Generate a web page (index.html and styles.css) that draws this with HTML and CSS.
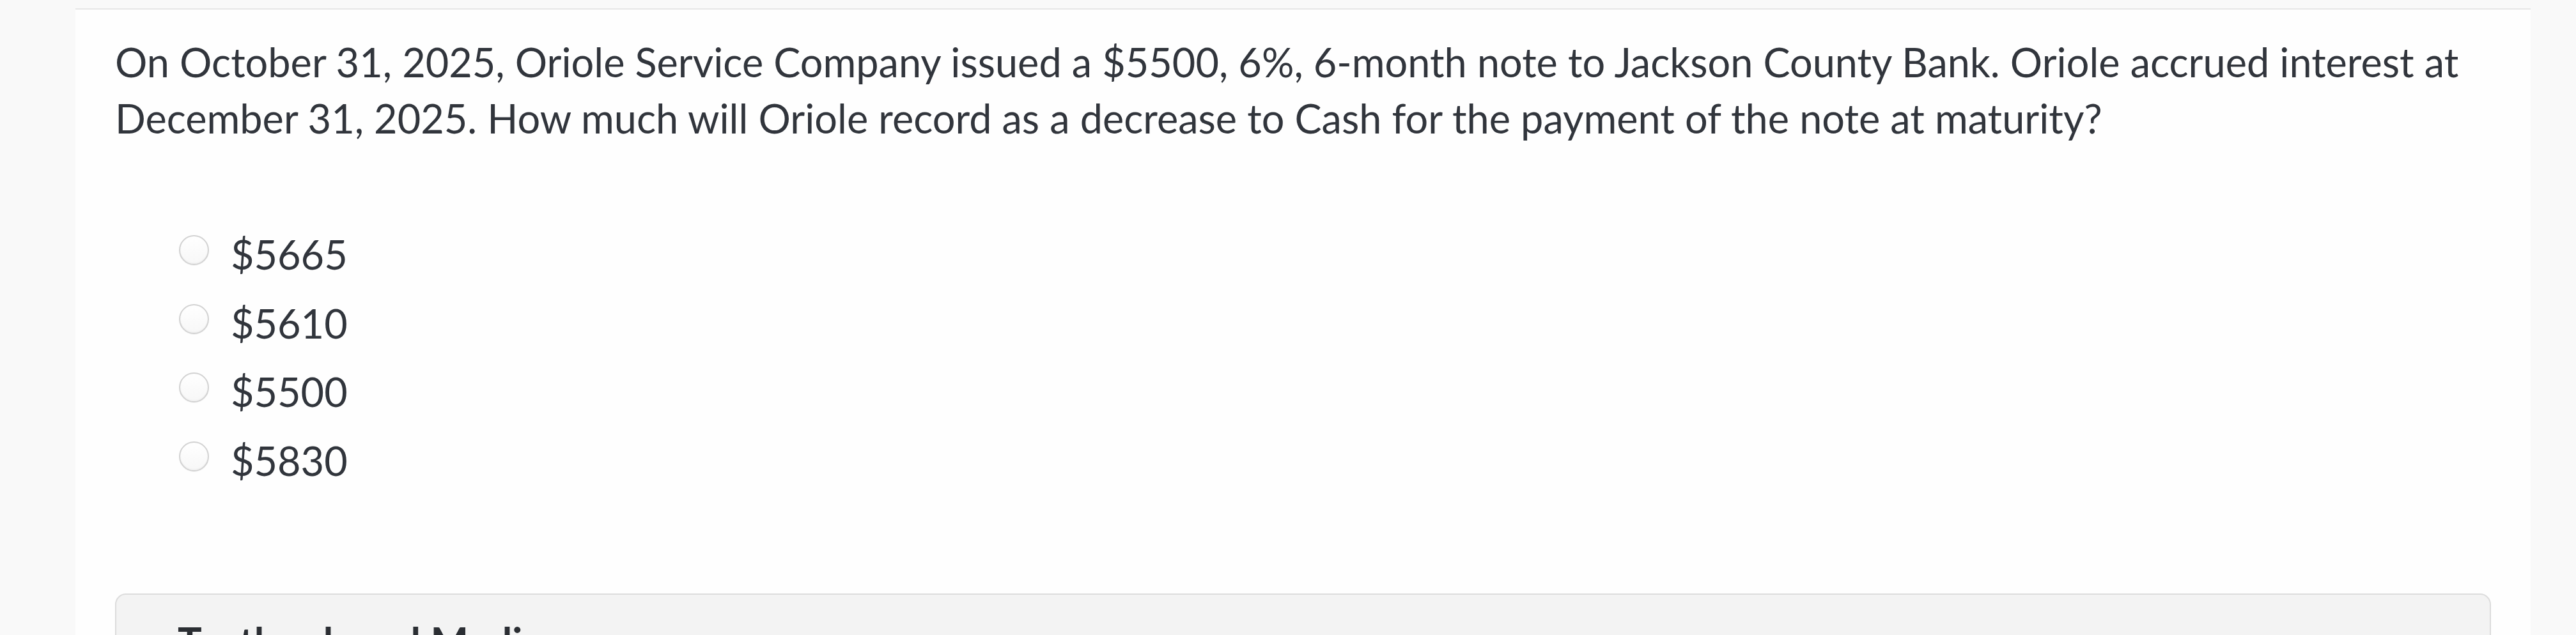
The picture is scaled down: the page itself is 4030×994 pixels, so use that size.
FILE: index.html
```html
<!DOCTYPE html>
<html lang="en">
<head>
<meta charset="utf-8">
<title>Question</title>
<link rel="stylesheet" href="styles.css">
</head>
<body>
<main class="panel">
  <p class="question">On October 31, 2025, Oriole Service Company issued a $5500, 6%, 6-month note to Jackson County Bank. Oriole accrued interest at December 31, 2025. How much will Oriole record as a decrease to Cash for the payment of the note at maturity?</p>
  <ul class="options">
    <li class="option"><input class="radio" type="radio" name="ans"><span class="label">$5665</span></li>
    <li class="option"><input class="radio" type="radio" name="ans"><span class="label">$5610</span></li>
    <li class="option"><input class="radio" type="radio" name="ans"><span class="label">$5500</span></li>
    <li class="option"><input class="radio" type="radio" name="ans"><span class="label">$5830</span></li>
  </ul>
  <section class="media">
    <h2 class="media-title">Textbook and Media</h2>
  </section>
</main>
</body>
</html>
```

FILE: styles.css
```css
html, body {
  margin: 0;
  padding: 0;
}
body {
  background: #f9f9f9;
  font-family: Lato, "Open Sans", sans-serif;
  color: #31353c;
  overflow: hidden;
  height: 994px;
}
.panel {
  margin: 13px 0 0 118px;
  width: 3841px;
  box-sizing: border-box;
  min-height: 1200px;
  background: #fefefe;
  border-top: 2px solid #e7e7e7;
  padding: 38px 62px 0 62px;
}
.question {
  margin: 0;
  font-size: 63px;
  line-height: 88px;
}
.options {
  list-style: none;
  margin: 125px 0 0 0;
  padding: 0 0 0 100px;
  display: flex;
  flex-direction: column;
  gap: 19.7px;
}
.option {
  display: flex;
  align-items: flex-start;
  font-size: 63px;
  line-height: 88px;
  height: 88px;
}
.radio {
  appearance: none;
  -webkit-appearance: none;
  margin: 14px 34px 0 0;
  width: 47px;
  height: 47px;
  border-radius: 50%;
  border: 2px solid #d2d2d2;
  background: linear-gradient(#ffffff, #f7f7f7);
  box-shadow: inset 0 -1px 2px rgba(0,0,0,0.05), 0 1px 1px rgba(0,0,0,0.04);
  box-sizing: border-box;
  flex: none;
}
.media {
  margin-top: 164px;
  background: #f3f3f3;
  border: 2px solid #dcdcdc;
  border-radius: 17px;
  padding: 29px 96px;
  min-height: 300px;
}
.media-title {
  margin: 0;
  font-size: 63px;
  line-height: 88px;
  font-weight: 700;
  color: #2b2e33;
}
```
